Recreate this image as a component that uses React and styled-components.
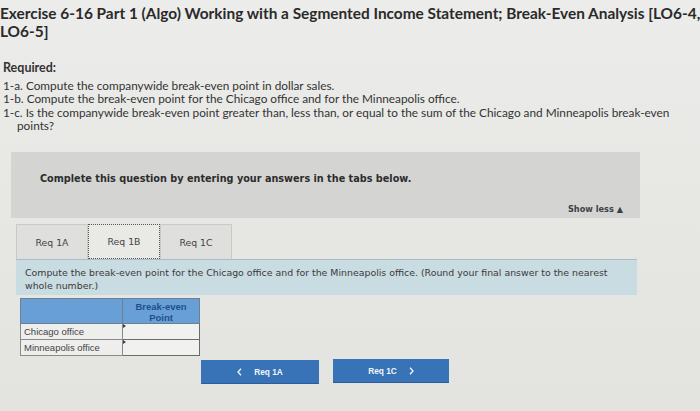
import React from "react";
import styled, { createGlobalStyle } from "styled-components";

const GlobalStyle = createGlobalStyle`
  html, body {
    margin: 0;
    padding: 0;
    background: #e8e8e5;
  }
  body {
    overflow: hidden;
  }
`;

const Page = styled.div`
  width: 700px;
  height: 411px;
  overflow: hidden;
  background: linear-gradient(180deg, #ececea 0%, #e6e7e3 60%, #e3e4e0 100%);
  font-family: Lato, "Open Sans", sans-serif;
  color: #2e2e2e;
`;

const Title = styled.h1`
  margin: 0;
  padding: 4px 0 0 0;
  font-size: 15.4px;
  line-height: 18px;
  font-weight: 700;
  white-space: nowrap;
  color: #2a2a2a;
`;

const Required = styled.div`
  margin-top: 21px;
  padding-left: 3px;
  font-size: 11.8px;
  line-height: 13.3px;
  color: #333;
`;

const RequiredHead = styled.div`
  font-weight: 700;
  font-size: 12.5px;
  line-height: 14px;
  margin-bottom: 4px;
`;

const ReqLine = styled.div`
  padding-left: ${(p) => (p.$indent ? "14px" : "0")};
`;

const Panel = styled.div`
  margin: 20px 0 0 11px;
  width: 629px;
  height: 66px;
  box-sizing: border-box;
  background: #d4d5d2;
  display: flex;
  flex-direction: column;
  justify-content: space-between;
  padding: 21px 17px 4px 29px;
  font-family: "DejaVu Sans", Verdana, sans-serif;
`;

const PanelText = styled.div`
  font-size: 9.7px;
  font-weight: 700;
  color: #2c2c2c;
`;

const ShowLess = styled.div`
  align-self: flex-end;
  font-size: 8.2px;
  font-weight: 700;
  color: #3b3f48;
`;

const Tabs = styled.div`
  display: flex;
  margin: 6px 0 0 16px;
  font-family: "DejaVu Sans", Verdana, sans-serif;
`;

const Tab = styled.div`
  width: 72px;
  height: 35px;
  box-sizing: border-box;
  display: flex;
  align-items: center;
  justify-content: center;
  font-size: 9.3px;
  color: #444;
  background: ${(p) => (p.$active ? "#e9e9e6" : "#dfe0dd")};
  border: ${(p) => (p.$active ? "1.5px dotted #555" : "1px solid #c9cac6")};
  border-bottom: ${(p) => (p.$active ? "1.5px dotted #555" : "none")};
`;

const Instruction = styled.div`
  margin-left: 16px;
  width: 621px;
  box-sizing: border-box;
  padding: 6px 9px 3px 9px;
  background: #c9dce2;
  border-top: 1px solid #a9bcc4;
  font-family: "DejaVu Sans", Verdana, sans-serif;
  font-size: 9.4px;
  line-height: 13px;
  color: #3a3a3a;
`;

const Table = styled.table`
  margin: 3px 0 0 20px;
  border-collapse: collapse;
  font-family: "Liberation Sans", Arial, sans-serif;
  font-size: 9.5px;
`;

const HeadCell = styled.th`
  background: #689fd6;
  border: 1px solid #6f7f90;
  color: #1f4f8a;
  font-weight: 700;
  font-size: 9.5px;
  line-height: 11px;
  padding: 2px 0 0 0;
  height: 22px;
  vertical-align: top;
  width: ${(p) => p.$w}px;
`;

const LabelCell = styled.td`
  border: 1px solid #8a8a8a;
  background: #eeeeec;
  color: #444;
  height: 15px;
  padding: 0 3px;
`;

const InputCell = styled.td`
  position: relative;
  border: 1.5px solid #6b6b6b;
  background: #f1f1ef;
  height: 15px;
  padding: 0;
`;

const Marker = styled.span`
  position: absolute;
  left: 0;
  top: 0;
  width: 0;
  height: 0;
  border-top: 2.5px solid transparent;
  border-bottom: 2.5px solid transparent;
  border-left: 3px solid #2f3f55;
`;

const NavRow = styled.div`
  display: flex;
  align-items: flex-start;
  gap: 14px;
  margin: 3px 0 0 201px;
`;

const NavButton = styled.div`
  width: ${(p) => p.$w}px;
  height: 23px;
  margin-top: ${(p) => p.$top}px;
  background: #3873b8;
  box-shadow: 0 1px 0 #2b5d98;
  display: flex;
  align-items: center;
  justify-content: center;
  gap: 12px;
  font-family: "Liberation Sans", Arial, sans-serif;
  font-size: 8.3px;
  font-weight: 700;
  color: #f3f6fb;
`;

const Chevron = ({ dir }) => (
  <svg width="5" height="8" viewBox="0 0 5 8">
    <path
      d={dir === "left" ? "M4 0.8 L1 4 L4 7.2" : "M1 0.8 L4 4 L1 7.2"}
      fill="none"
      stroke="#f3f6fb"
      strokeWidth="1.3"
    />
  </svg>
);

const App = () => {
  return (
    <Page>
      <GlobalStyle />
      <Title>
        Exercise 6-16 Part 1 (Algo) Working with a Segmented Income Statement; Break-Even Analysis [LO6-4,
        <br />
        LO6-5]
      </Title>
      <Required>
        <RequiredHead>Required:</RequiredHead>
        <ReqLine>1-a. Compute the companywide break-even point in dollar sales.</ReqLine>
        <ReqLine>1-b. Compute the break-even point for the Chicago office and for the Minneapolis office.</ReqLine>
        <ReqLine>
          1-c. Is the companywide break-even point greater than, less than, or equal to the sum of the Chicago and Minneapolis break-even
        </ReqLine>
        <ReqLine $indent>points?</ReqLine>
      </Required>
      <Panel>
        <PanelText>Complete this question by entering your answers in the tabs below.</PanelText>
        <ShowLess>Show less ▲</ShowLess>
      </Panel>
      <Tabs>
        <Tab>Req 1A</Tab>
        <Tab $active>Req 1B</Tab>
        <Tab>Req 1C</Tab>
      </Tabs>
      <Instruction>
        Compute the break-even point for the Chicago office and for the Minneapolis office. (Round your final answer to the nearest whole number.)
      </Instruction>
      <Table>
        <thead>
          <tr>
            <HeadCell $w={101}></HeadCell>
            <HeadCell $w={76}>
              Break-even
              <br />
              Point
            </HeadCell>
          </tr>
        </thead>
        <tbody>
          <tr>
            <LabelCell>Chicago office</LabelCell>
            <InputCell>
              <Marker />
            </InputCell>
          </tr>
          <tr>
            <LabelCell>Minneapolis office</LabelCell>
            <InputCell>
              <Marker />
            </InputCell>
          </tr>
        </tbody>
      </Table>
      <NavRow>
        <NavButton $w={118} $top={1}>
          <Chevron dir="left" />
          <span>Req 1A</span>
        </NavButton>
        <NavButton $w={116} $top={0}>
          <span>Req 1C</span>
          <Chevron dir="right" />
        </NavButton>
      </NavRow>
    </Page>
  );
};

export default App;
